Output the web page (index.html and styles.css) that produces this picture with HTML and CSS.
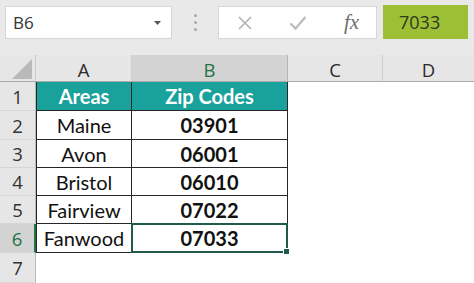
FILE: index.html
```html
<!DOCTYPE html>
<html>
<head>
<meta charset="utf-8">
<link rel="stylesheet" href="styles.css">
</head>
<body>
<div class="app">
  <div class="toolbar">
    <div class="namebox">
      <span class="ref">B6</span>
      <svg class="drop" width="7" height="4" viewBox="0 0 7 4"><path d="M0 0 H7 L3.5 4 Z" fill="#555"/></svg>
    </div>
    <div class="dots"><i></i><i></i><i></i></div>
    <div class="fbox">
      <svg class="ico" width="16" height="16" viewBox="0 0 16 16"><path d="M2 2 L14 14 M14 2 L2 14" stroke="#b3b3b3" stroke-width="1.6" fill="none"/></svg>
      <svg class="ico check" width="18" height="16" viewBox="0 0 18 16"><path d="M1.5 8.5 L6.5 13.5 L16.5 2" stroke="#bdbdbd" stroke-width="2.4" fill="none"/></svg>
      <span class="fx">fx</span>
    </div>
    <div class="value">7033</div>
  </div>
  <div class="sheet">
    <div class="corner"><svg width="20" height="20" viewBox="0 0 20 20"><path d="M20 0 V20 H0 Z" fill="#b9b9b9"/></svg></div>
    <div class="colhdr">A</div>
    <div class="colhdr sel">B</div>
    <div class="colhdr">C</div>
    <div class="colhdr last">D</div>

    <div class="rowhdr">1</div>
    <div class="cell head first">Areas</div>
    <div class="cell head">Zip Codes</div>
    <div class="blank"></div><div class="blank"></div>

    <div class="rowhdr">2</div>
    <div class="cell first">Maine</div>
    <div class="cell num">03901</div>
    <div class="blank"></div><div class="blank"></div>

    <div class="rowhdr">3</div>
    <div class="cell first">Avon</div>
    <div class="cell num">06001</div>
    <div class="blank"></div><div class="blank"></div>

    <div class="rowhdr">4</div>
    <div class="cell first">Bristol</div>
    <div class="cell num">06010</div>
    <div class="blank"></div><div class="blank"></div>

    <div class="rowhdr">5</div>
    <div class="cell first">Fairview</div>
    <div class="cell num">07022</div>
    <div class="blank"></div><div class="blank"></div>

    <div class="rowhdr sel">6</div>
    <div class="cell first">Fanwood</div>
    <div class="cell num active">07033<span class="handle"></span></div>
    <div class="blank"></div><div class="blank"></div>

    <div class="rowhdr">7</div>
    <div class="blank"></div><div class="blank"></div><div class="blank"></div><div class="blank"></div>
  </div>
</div>
</body>
</html>
```
FILE: styles.css
```css
html, body {
  margin: 0;
  padding: 0;
}
body {
  width: 474px;
  height: 283px;
  overflow: hidden;
  background: #ffffff;
  font-family: "Lato", "Liberation Sans", sans-serif;
}
.app {
  width: 474px;
  height: 283px;
  display: flex;
  flex-direction: column;
}
.toolbar {
  height: 55px;
  box-sizing: border-box;
  background: #e9e9e9;
  display: flex;
  align-items: flex-start;
  padding: 6px 0 0 5px;
}
.namebox {
  width: 167px;
  height: 33px;
  box-sizing: border-box;
  background: #fff;
  border: 1px solid #d6d6d6;
  display: flex;
  align-items: center;
  justify-content: space-between;
  padding: 0 10px 0 7px;
}
.ref {
  font-family: "Open Sans", "Liberation Sans", sans-serif;
  font-size: 17px;
  color: #333;
}
.dots {
  width: 46px;
  height: 33px;
  display: flex;
  flex-direction: column;
  align-items: center;
  justify-content: center;
  gap: 4px;
}
.dots i {
  display: block;
  width: 3px;
  height: 3px;
  border-radius: 50%;
  background: #a9a9a9;
}
.fbox {
  width: 159px;
  height: 33px;
  box-sizing: border-box;
  background: #fff;
  border: 1px solid #d6d6d6;
  display: flex;
  align-items: center;
  padding-left: 18px;
}
.ico.check {
  margin-left: 36px;
}
.fx {
  margin-left: 37px;
  font-family: "Liberation Serif", "DejaVu Serif", serif;
  font-style: italic;
  font-size: 21px;
  color: #6e6e6e;
}
.value {
  margin-left: 6px;
  width: 85px;
  height: 34px;
  margin-top: -1px;
  background: #9dbf36;
  color: #2e3a1a;
  font-family: "Open Sans", "Liberation Sans", sans-serif;
  font-size: 18px;
  display: flex;
  align-items: center;
  padding-left: 16px;
  box-sizing: border-box;
}
.sheet {
  display: grid;
  grid-template-columns: 36px 96px 156px 95px 1fr;
  grid-template-rows: 27px 29px 29px 28px 28px 28px 29px 30px;
}
.corner {
  background: #e6e6e6;
  border-right: 1px solid #c9c9c9;
  border-bottom: 1px solid #ababab;
  display: flex;
  align-items: flex-end;
  justify-content: flex-end;
  padding: 0 3px 2px 0;
  box-sizing: border-box;
}
.colhdr {
  background: #e6e6e6;
  border-right: 1px solid #cdcdcd;
  border-bottom: 1px solid #ababab;
  box-sizing: border-box;
  display: flex;
  align-items: center;
  justify-content: center;
  padding-top: 3px;
  font-family: "Open Sans", "Liberation Sans", sans-serif;
  font-size: 18.5px;
  color: #2b2b2b;
}
.colhdr.sel {
  background: #d3d3d3;
  color: #217346;
  border-right-color: #b5b5b5;
}
.colhdr.last {
  border-right: none;
}
.rowhdr {
  background: #e6e6e6;
  border-right: 1px solid #b9b9b9;
  border-bottom: 1px solid #d5d5d5;
  box-sizing: border-box;
  display: flex;
  align-items: center;
  justify-content: center;
  font-family: "Open Sans", "Liberation Sans", sans-serif;
  font-size: 18.5px;
  color: #333;
}
.rowhdr.sel {
  background: #d3d3d3;
  color: #217346;
  border-right: 2px solid #217346;
}
.blank {
  background: #fff;
}
.cell {
  position: relative;
  background: #fff;
  border-right: 1px solid #262626;
  border-bottom: 1px solid #262626;
  box-sizing: border-box;
  display: flex;
  align-items: center;
  justify-content: center;
  font-size: 20px;
  color: #111;
}
.cell.first {
  border-left: 1px solid #262626;
}
.cell.head {
  background: #19a19b;
  color: #fff;
  font-weight: 700;
}
.cell.num {
  font-weight: 700;
}
.cell.active {
  border: 2px solid #1e5b4d;
  margin: -1px 0 0 -1px;
}
.handle {
  position: absolute;
  right: -4px;
  bottom: -4px;
  width: 5px;
  height: 5px;
  background: #1e5b4d;
  border: 1px solid #fff;
}
```
